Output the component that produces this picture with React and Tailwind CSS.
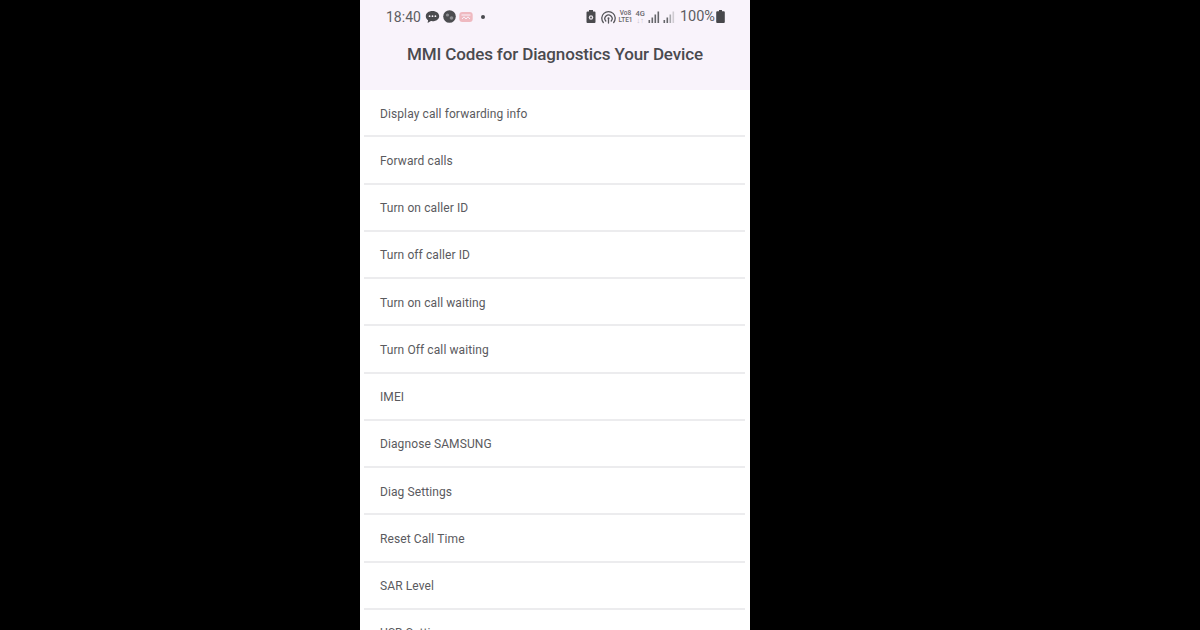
import React from 'react';

const ITEMS = [
  'Display call forwarding info',
  'Forward calls',
  'Turn on caller ID',
  'Turn off caller ID',
  'Turn on call waiting',
  'Turn Off call waiting',
  'IMEI',
  'Diagnose SAMSUNG',
  'Diag Settings',
  'Reset Call Time',
  'SAR Level',
  'USB Settings',
];

// Status bar icons
const ChatIcon = () => (
  <svg width="15" height="14" viewBox="0 0 15 14">
    <path d="M7.5 1C3.6 1 .8 3.2.8 6.200c0 1.700.9 3.100 2.300 4L2.600 13l3.300-1.900c.5.1 1.100.1 1.600.1 3.900 0 6.700-2.200 6.700-5S11.400 1 7.500 1z" fill="#4a4a4e" />
    <circle cx="4.600" cy="6.200" r=".9" fill="#f9f3fb" />
    <circle cx="7.500" cy="6.200" r=".9" fill="#f9f3fb" />
    <circle cx="10.400" cy="6.200" r=".9" fill="#f9f3fb" />
  </svg>
);

const BadgeIcon = () => (
  <svg width="13" height="13" viewBox="0 0 13 13">
    <circle cx="6.500" cy="6.500" r="6.300" fill="#4c4c50" />
    <circle cx="4.500" cy="5" r="1.600" fill="#8d8d91" />
    <circle cx="8.500" cy="8" r="1.800" fill="#8d8d91" />
  </svg>
);

const PinkIcon = () => (
  <svg width="14" height="12" viewBox="0 0 14 12">
    <rect x=".3" y="1" width="13.400" height="10" rx="3" fill="#efb9c0" />
    <path d="M2.500 4h9M3 8l2-2.200L7 8l2-2.200L11 8" stroke="#f9f3fb" strokeWidth="1" fill="none" />
  </svg>
);

const LockBatteryIcon = () => (
  <svg width="10" height="13" viewBox="0 0 10 13">
    <path d="M3 0h4v1.500h1.500a1 1 0 0 1 1 1V12a1 1 0 0 1-1 1h-7a1 1 0 0 1-1-1V2.500a1 1 0 0 1 1-1H3z" fill="#4a4a4e" />
    <circle cx="5" cy="7.500" r="2.200" fill="#e9e4ea" />
    <circle cx="5" cy="7.500" r=".9" fill="#4a4a4e" />
  </svg>
);

const HotspotIcon = () => (
  <svg width="15" height="14" viewBox="0 0 15 14" fill="none" stroke="#55555a" strokeWidth="1.300" strokeLinecap="round">
    <path d="M2.300 12.500A6.700 6.700 0 1 1 12.700 12.500" />
    <path d="M4.800 11A3.600 3.600 0 1 1 10.200 11" />
    <circle cx="7.500" cy="8.200" r="1" fill="#55555a" stroke="none" />
    <path d="M7.500 9v4" />
  </svg>
);

const SignalIcon = ({ faded }) => (
  <svg width="12" height="12" viewBox="0 0 12 12">
    <rect x="0.500" y="9" width="1.600" height="3" fill="#66666a" />
    <rect x="3.500" y="6.500" width="1.600" height="5.500" fill="#66666a" />
    <rect x="6.500" y="3.500" width="1.600" height="8.500" fill={faded ? '#a9a9ad' : '#66666a'} />
    <rect x="9.500" y="0.500" width="1.600" height="11.500" fill={faded ? '#d0ccd2' : '#66666a'} />
  </svg>
);

const BatteryIcon = () => (
  <svg width="9" height="13" viewBox="0 0 9 13">
    <path d="M3 0h3v1.200h1.800a1 1 0 0 1 1 1V12a1 1 0 0 1-1 1H1.200a1 1 0 0 1-1-1V2.200a1 1 0 0 1 1-1H3z" fill="#47474b" />
  </svg>
);

const App = () => {
  return (
    <div className="w-[1200px] h-[630px] bg-black overflow-hidden pl-[360px] font-['Roboto',sans-serif]">
      <div className="w-[390px] h-[630px] bg-white overflow-hidden">
        <div className="h-[90px] bg-[#f9f3fb] flex flex-col">
          <div className="flex items-center justify-between h-[33px] pl-[26px] pr-[25px] text-[#5d5d62]">
            <div className="flex items-center">
              <span className="text-[14px] leading-none">18:40</span>
              <div className="flex items-center gap-[3px] ml-[4px]">
                <ChatIcon />
                <BadgeIcon />
                <PinkIcon />
              </div>
              <span className="w-[4px] h-[4px] rounded-full bg-[#4a4a4e] ml-[8px]" />
            </div>
            <div className="flex items-center">
              <LockBatteryIcon />
              <span className="ml-[5px] flex"><HotspotIcon /></span>
              <span className="ml-[3px] flex flex-col text-[6.500px] leading-[7px] font-medium items-center text-[#66666a]">
                <span>Vo8</span>
                <span>LTE1</span>
              </span>
              <span className="ml-[3px] flex flex-col text-[7.500px] leading-[7px] font-medium items-center text-[#66666a]">
                <span>4G</span>
                <span className="text-[#c4c0c6]">↓↑</span>
              </span>
              <span className="ml-[3px] flex"><SignalIcon /></span>
              <span className="ml-[3px] flex"><SignalIcon faded /></span>
              <span className="ml-[5px] pt-[2px] text-[14.500px] leading-none">100%</span>
              <span className="ml-[1px] flex"><BatteryIcon /></span>
            </div>
          </div>
          <h1 className="text-[17px] leading-[43px] font-medium tracking-[-0.14px] text-center text-[#4a4a4f]">
            MMI Codes for Diagnostics Your Device
          </h1>
        </div>
        <div className="pl-[4px] pr-[5px]">
          {ITEMS.map(item => (
            <div key={item} className="h-[47.250px] border-b-2 border-[#ececee] flex items-center pl-[16px] pt-[2px] text-[12px] tracking-[0.1px] text-[#5a5a5e]">
              {item}
            </div>
          ))}
        </div>
      </div>
    </div>
  );
};

export default App;
